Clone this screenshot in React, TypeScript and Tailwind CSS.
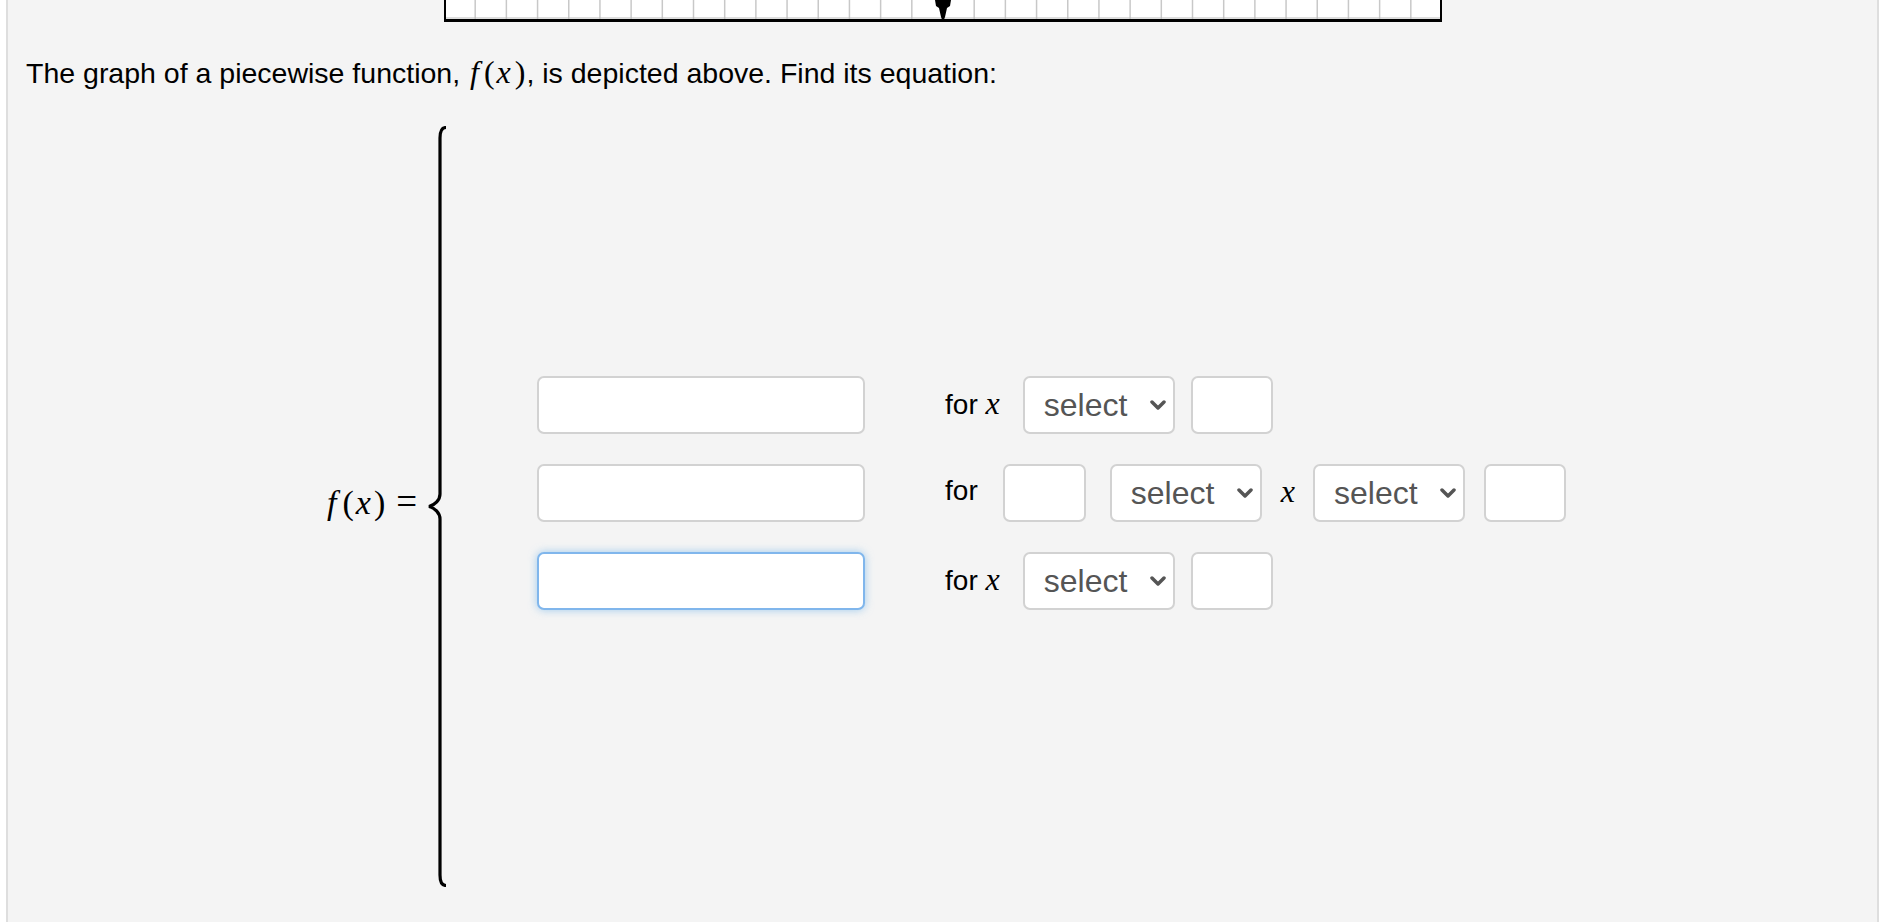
import React from 'react';

// italic math letter, TeX-ish look
function M({ children, className = '' }: { children: React.ReactNode; className?: string }) {
  return <span className={`font-['Liberation_Serif','Times_New_Roman',serif] italic ${className}`}>{children}</span>;
}

function GraphBottom() {
  const w = 998;
  const cols = 32;
  const lines = Array.from({ length: cols - 1 }, (_, i) => ((i + 1) * w) / cols);
  return (
    <svg width={w} height={22} viewBox={`0 0 ${w} 22`}>
      <rect x={0} y={0} width={w} height={20} fill="#fff" />
      {lines.map((x, i) => (
        <line key={i} x1={x} y1={0} x2={x} y2={19} stroke="#c8c8c8" strokeWidth={1.5} />
      ))}
      <line x1={0} y1={18} x2={w} y2={18} stroke="#bdbdbd" strokeWidth={1} />
      <rect x={0} y={19} width={w} height={3} fill="#000" />
      <rect x={0} y={0} width={2} height={22} fill="#000" />
      <rect x={w - 2} y={0} width={2} height={22} fill="#000" />
      {/* y axis arrow head pointing down */}
      <polygon points="491,0 507,0 506,6 503,8 501,17 499,22 497,17 495,8 492,6" fill="#000" />
    </svg>
  );
}

function Brace() {
  return (
    <svg width={24} height={761} viewBox="0 0 24 761" className="shrink-0">
      <path
        d="M19 1.5 C15 1.5 13 5 13 12 L13 368 C13 374 8 379 2 380.5 C8 382 13 387 13 393 L13 749 C13 756 15 759.5 19 759.5"
        fill="none"
        stroke="#000"
        strokeWidth={3.2}
      />
    </svg>
  );
}

function Select({ w = 'w-[152px]' }: { w?: string }) {
  return (
    <div className={`relative h-[58px] ${w} shrink-0`}>
      <select className="h-full w-full appearance-none rounded-[7px] border-2 border-[#d2d2d2] bg-white pl-[19px] text-[32px] text-[#555] outline-none">
        <option>select</option>
      </select>
      <svg width={16} height={11} viewBox="0 0 16 11" className="pointer-events-none absolute right-[9px] top-[24px]">
        <polyline points="2,2 8,8 14,2" fill="none" stroke="#555" strokeWidth={3.5} strokeLinecap="round" strokeLinejoin="round" />
      </svg>
    </div>
  );
}

function Box({ w = 'w-[82px]' }: { w?: string }) {
  return <input className={`h-[58px] ${w} shrink-0 rounded-[7px] border-2 border-[#d2d2d2] bg-white outline-none`} />;
}

function MainInput({ focused = false }: { focused?: boolean }) {
  return (
    <input
      className={`h-[58px] w-[328px] shrink-0 rounded-[7px] border-2 bg-white outline-none ${
        focused ? 'border-[#80b6ec] shadow-[0_0_9px_rgba(102,175,233,0.6)]' : 'border-[#d2d2d2]'
      }`}
    />
  );
}

export default function App() {
  return (
    <div className="h-[922px] w-full overflow-hidden bg-white font-['Liberation_Sans',Arial,sans-serif] text-black">
      <div className="ml-[6px] h-full w-[1873px] border-x-2 border-[#dedede] bg-[#f4f4f4]">
        <div className="flex justify-center">
          <GraphBottom />
        </div>

        <p className="mt-[31px] pl-[18px] text-[28.5px] leading-[39px]">
          The graph of a piecewise function,{' '}
          <span className="font-['Liberation_Serif',serif] text-[32px]">
            <M className="pl-[2px] pr-[5px]">f</M>
            <span>(</span>
            <M className="pl-[2px] pr-[4px]">x</M>
            <span className="pr-[1px]">)</span>
          </span>
          , is depicted above. Find its equation:
        </p>

        {/* piecewise answer */}
        <div className="mt-[33px] flex items-center pl-[317px]">
          <div className="mb-[9px] flex items-baseline font-['Liberation_Serif',serif] text-[34px]">
            <M className="pl-[2px] pr-[6px]">f</M>
            <span>(</span>
            <M className="pl-[2px] pr-[3px]">x</M>
            <span>)</span>
            <span className="ml-[11px] mr-[10px] text-[37px]">=</span>
          </div>
          <Brace />

          <div className="mb-[28px] ml-[86px] flex flex-col gap-[30px]">
            <div className="flex items-center">
              <MainInput />
              <span className="mb-[4px] ml-[80px] text-[28px]">
                for <M className="text-[32px]">x</M>
              </span>
              <div className="ml-[23px] flex items-center gap-[16px]">
                <Select />
                <Box />
              </div>
            </div>

            <div className="flex items-center">
              <MainInput />
              <span className="mb-[4px] ml-[80px] text-[28px]">for</span>
              <div className="ml-[25px]">
                <Box w="w-[83px]" />
              </div>
              <div className="ml-[24px]">
                <Select />
              </div>
              <span className="mb-[4px] ml-[19px] mr-[18px] text-[28px]">
                <M className="text-[32px]">x</M>
              </span>
              <Select />
              <div className="ml-[19px]">
                <Box />
              </div>
            </div>

            <div className="flex items-center">
              <MainInput focused />
              <span className="mb-[4px] ml-[80px] text-[28px]">
                for <M className="text-[32px]">x</M>
              </span>
              <div className="ml-[23px] flex items-center gap-[16px]">
                <Select />
                <Box />
              </div>
            </div>
          </div>
        </div>
      </div>
    </div>
  );
}
